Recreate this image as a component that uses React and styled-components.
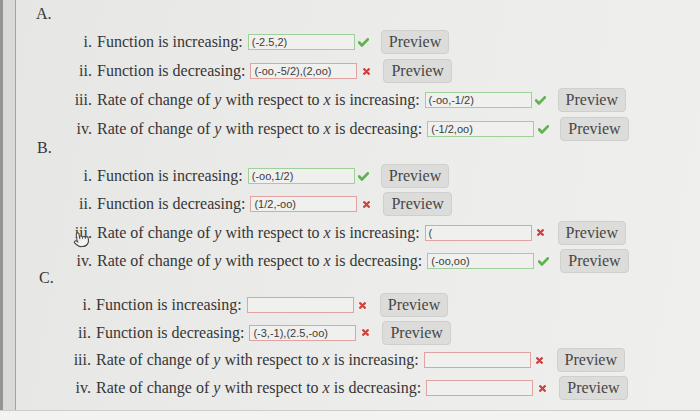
import styled, { createGlobalStyle } from "styled-components";
import { Pointer } from "lucide-react";

const GlobalStyle = createGlobalStyle`
  html, body {
    margin: 0;
    padding: 0;
    background: #f1f1ef;
  }
  body {
    font-family: "Liberation Serif", "Times New Roman", serif;
    color: #363636;
  }
`;

const sections = [
  {
    letter: "A",
    headShift: 0,
    shift: 0,
    rowH: 29,
    top: 10,
    gap: 9.5,
    rows: [
      { n: "i", label: "Function is increasing:", value: "(-2.5,2)", ok: true },
      { n: "ii", label: "Function is decreasing:", value: "(-oo,-5/2),(2,oo)", ok: false },
      { n: "iii", rate: "increasing", value: "(-oo,-1/2)", ok: true },
      { n: "iv", rate: "decreasing", value: "(-1/2,oo)", ok: true },
    ],
  },
  {
    letter: "B",
    headShift: 1,
    shift: 0,
    rowH: 28.3,
    top: 0.5,
    gap: 10,
    rows: [
      { n: "i", label: "Function is increasing:", value: "(-oo,1/2)", ok: true },
      { n: "ii", label: "Function is decreasing:", value: "(1/2,-oo)", ok: false },
      { n: "iii", rate: "increasing", value: "(", ok: false, cursor: true },
      { n: "iv", rate: "decreasing", value: "(-oo,oo)", ok: true },
    ],
  },
  {
    letter: "C",
    headShift: 3,
    shift: -1,
    rowH: 27.7,
    top: -1,
    gap: 9,
    rows: [
      { n: "i", label: "Function is increasing:", value: "", ok: false },
      { n: "ii", label: "Function is decreasing:", value: "(-3,-1),(2.5,-oo)", ok: false },
      { n: "iii", rate: "increasing", value: "", ok: false },
      { n: "iv", rate: "decreasing", value: "", ok: false },
    ],
  },
];

function Check() {
  return (
    <svg width="11" height="9" viewBox="0 0 11 9">
      <path d="M1.2 4.6 L4 7.4 L9.8 1.4" fill="none" stroke="#5fb34f" strokeWidth="2.8" strokeLinecap="round" strokeLinejoin="round" />
    </svg>
  );
}

function Cross() {
  return (
    <svg width="7" height="7" viewBox="0 0 7 7">
      <path d="M1.2 1.2 L5.8 5.8 M5.8 1.2 L1.2 5.8" fill="none" stroke="#cf3f3d" strokeWidth="2.3" strokeLinecap="round" />
    </svg>
  );
}

function App() {
  return (
    <>
      <GlobalStyle />
      <S.Page>
        <S.Frame>
          <S.Edge />
          <S.Content>
            {sections.map((sec) => (
              <S.Section key={sec.letter}>
                <S.Header $shift={sec.headShift} $top={sec.top}>{sec.letter}.</S.Header>
                <S.List $gap={sec.gap} $shift={sec.shift}>
                  {sec.rows.map((r) => (
                    <S.Row key={r.n} $h={sec.rowH}>
                      <S.Marker>{r.n}.</S.Marker>
                      <S.Label>
                        {r.label ? (
                          r.label
                        ) : (
                          <>
                            Rate of change of <S.Var>y</S.Var> with respect to <S.Var>x</S.Var> is {r.rate}:
                          </>
                        )}
                      </S.Label>
                      <S.Answer $ok={r.ok}>{r.value}</S.Answer>
                      <S.Mark>{r.ok ? <Check /> : <Cross />}</S.Mark>
                      <S.Preview>Preview</S.Preview>
                      {r.cursor && (
                        <S.Cursor>
                          <Pointer size={17} strokeWidth={1.6} color="#4a4a4a" fill="#f4f4f4" />
                        </S.Cursor>
                      )}
                    </S.Row>
                  ))}
                </S.List>
              </S.Section>
            ))}
          </S.Content>
        </S.Frame>
        <S.Footer />
      </S.Page>
    </>
  );
}
export default App;

const Page = styled.div`
  width: 700px;
  height: 420px;
  display: flex;
  flex-direction: column;
  overflow: hidden;
`;

const Frame = styled.div`
  height: 410px;
  display: flex;
  background: linear-gradient(100deg, #e6e6e4 0%, #ebebe9 45%, #efefed 100%);
  border-bottom: 1px solid #cdcdcb;
`;

const Edge = styled.div`
  width: 12px;
  flex: none;
  background: #dadad8;
  border-left: 3px solid #959595;
  border-right: 1.5px solid #a3a3a1;
`;

const Content = styled.div`
  flex: 1;
  display: flex;
  flex-direction: column;
`;

const Section = styled.div`
  display: flex;
  flex-direction: column;
`;

const Header = styled.div`
  height: 8px;
  line-height: 8px;
  font-size: 16px;
  margin-top: ${(p) => p.$top}px;
  padding-left: ${(p) => 20 + p.$shift}px;
`;

const List = styled.div`
  display: flex;
  flex-direction: column;
  margin-top: ${(p) => p.$gap}px;
  padding-left: ${(p) => 52 + p.$shift}px;
`;

const Row = styled.div`
  position: relative;
  height: ${(p) => p.$h}px;
  display: flex;
  align-items: center;
  font-size: 16px;
  white-space: nowrap;
`;

const Marker = styled.span`
  width: 24px;
  text-align: right;
  margin-right: 5px;
`;

const Label = styled.span`
  margin-right: 5px;
`;

const Var = styled.i`
  font-family: "Liberation Serif", "Times New Roman", serif;
  font-size: 16px;
`;

const Answer = styled.div`
  width: 107px;
  height: 16px;
  box-sizing: border-box;
  padding: 0 3px;
  border: 1px solid ${(p) => (p.$ok ? "#9fd09a" : "#e0a3a1")};
  background: #f0f0ee;
  font-family: "Liberation Sans", Arial, sans-serif;
  font-size: 11px;
  line-height: 14px;
  color: #3c3c3c;
  overflow: hidden;
`;

const Mark = styled.span`
  width: 18px;
  display: flex;
  justify-content: center;
  align-items: center;
`;

const Preview = styled.div`
  margin-left: 8px;
  height: 24px;
  box-sizing: border-box;
  padding: 0 7px;
  display: flex;
  align-items: center;
  background: #dcdcda;
  border: 1px solid #cfcfcd;
  border-radius: 4px;
  font-size: 16px;
  color: #474747;
`;

const Cursor = styled.span`
  position: absolute;
  left: 5px;
  top: 12px;
  transform: rotate(-8deg);
`;

const Footer = styled.div`
  flex: 1;
  background: #f3f3f1;
`;

const S = {
  Page,
  Frame,
  Edge,
  Content,
  Section,
  Header,
  List,
  Row,
  Marker,
  Label,
  Var,
  Answer,
  Mark,
  Preview,
  Cursor,
  Footer,
};
